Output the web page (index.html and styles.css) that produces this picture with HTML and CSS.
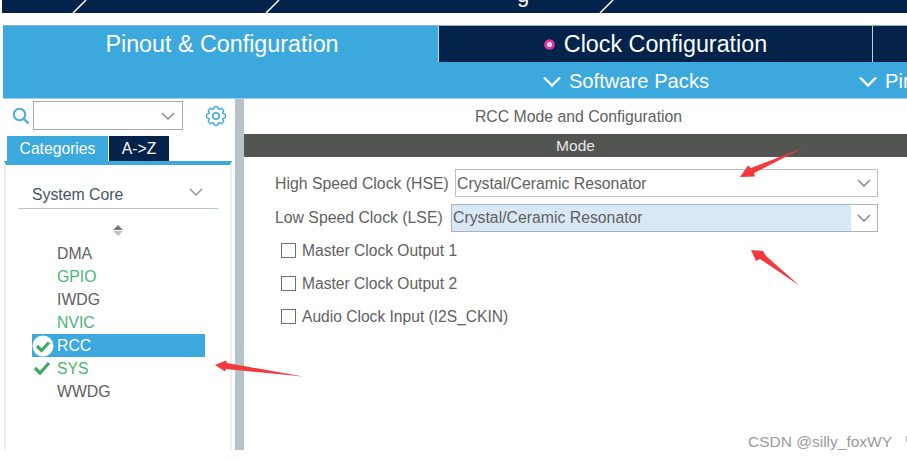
FILE: index.html
```html
<!DOCTYPE html>
<html lang="en">
<head>
    <meta charset="UTF-8">
    <title>RCC Mode and Configuration</title>
    <link rel="stylesheet" href="styles.css">
</head>
<body>
    <div class="page">
        <!-- Breadcrumb strip, cut off by the crop -->
        <div class="top-bar">
            <span class="crumb-cut">g</span>
            <svg class="crumb-lines" width="905" height="13" viewBox="0 0 905 13">
                <path d="M71 13 L84 0 M264 13 L277 0 M598 13 L611 0" stroke="#fff" stroke-width="1.5" fill="none"/>
            </svg>
        </div>

        <div class="tabs">
            <div class="tab-col tab-col-active">
                <div class="tab-main tab-main-pinout">Pinout &amp; Configuration</div>
                <div class="tab-sub"></div>
            </div>
            <div class="tab-col tab-col-clock">
                <div class="tab-main tab-dark">
                    <svg class="clock-dot" width="11" height="11" viewBox="0 0 12 12">
                        <circle cx="6" cy="6" r="5.8" fill="#e0369b"/>
                        <circle cx="6" cy="6" r="2.8" fill="#f6d5e8"/>
                    </svg>
                    Clock Configuration
                </div>
                <div class="tab-sub tab-sub-packs">
                    <svg class="sub-chevron" width="18" height="11" viewBox="0 0 18 11"><path d="M1 1.5 L9 9.5 L17 1.5" stroke="#fff" stroke-width="2.4" fill="none"/></svg>
                    Software Packs
                </div>
            </div>
            <div class="tab-col tab-col-rest">
                <div class="tab-main tab-dark"></div>
                <div class="tab-sub tab-sub-left">
                    <svg class="sub-chevron" width="18" height="11" viewBox="0 0 18 11"><path d="M1 1.5 L9 9.5 L17 1.5" stroke="#fff" stroke-width="2.4" fill="none"/></svg>
                    Pinout
                </div>
            </div>
        </div>

        <div class="workspace">
            <div class="sidebar">
                <div class="search-row">
                    <svg class="search-icon" width="18" height="18" viewBox="0 0 18 18">
                        <circle cx="7.5" cy="7.5" r="5.7" stroke="#4aaee0" stroke-width="2" fill="none"/>
                        <path d="M11.7 11.7 L16.5 16.5" stroke="#4aaee0" stroke-width="2.4"/>
                    </svg>
                    <div class="search-box">
                        <svg width="14" height="8" viewBox="0 0 14 8"><path d="M1 1 L7 7 L13 1" stroke="#8a8a8a" stroke-width="1.5" fill="none"/></svg>
                    </div>
                    <svg class="gear-icon" width="20" height="20" viewBox="0 0 20 20">
                        <path d="M16.86 7.5 L19.36 8.35 L19.36 11.65 L16.86 12.5 L16.62 13.09 L17.78 15.45 L15.45 17.78 L13.09 16.62 L12.5 16.86 L11.65 19.36 L8.35 19.36 L7.5 16.86 L6.91 16.62 L4.55 17.78 L2.22 15.45 L3.38 13.09 L3.14 12.5 L0.64 11.65 L0.64 8.35 L3.14 7.5 L3.38 6.91 L2.22 4.55 L4.55 2.22 L6.91 3.38 L7.5 3.14 L8.35 0.64 L11.65 0.64 L12.5 3.14 L13.09 3.38 L15.45 2.22 L17.78 4.55 L16.62 6.91 Z" stroke="#4aaee0" stroke-width="1.5" fill="none" stroke-linejoin="round"/>
                        <circle cx="10" cy="10" r="3.2" stroke="#4aaee0" stroke-width="1.7" fill="none"/>
                    </svg>
                </div>
                <div class="side-tabs">
                    <div class="side-tab side-tab-active">Categories</div>
                    <div class="side-tab side-tab-dark">A-&gt;Z</div>
                </div>
                <div class="side-panel">
                    <div class="group-head">
                        <span>System Core</span>
                        <svg class="group-chevron" width="14" height="8" viewBox="0 0 14 8"><path d="M1 1 L7 7 L13 1" stroke="#8a9299" stroke-width="1.4" fill="none"/></svg>
                    </div>
                    <div class="scroll-mark">
                        <span class="scroll-up"></span>
                        <span class="scroll-down"></span>
                    </div>
                    <ul class="ip-list">
                        <li class="ip-item">DMA</li>
                        <li class="ip-item ip-green">GPIO</li>
                        <li class="ip-item">IWDG</li>
                        <li class="ip-item ip-green">NVIC</li>
                        <li class="ip-item ip-selected">
                            <svg class="ip-icon" width="22" height="22" viewBox="0 0 22 22">
                                <circle cx="11" cy="11" r="10.5" fill="#fff"/>
                                <path d="M5 11 L9.5 15.5 L17 7.5" stroke="#3fa96a" stroke-width="3.2" fill="none"/>
                            </svg>
                            RCC
                        </li>
                        <li class="ip-item ip-green">
                            <svg class="ip-icon" width="18" height="14" viewBox="0 0 18 14">
                                <path d="M2 7 L7 12 L16 2" stroke="#3fa96a" stroke-width="3.2" fill="none"/>
                            </svg>
                            SYS
                        </li>
                        <li class="ip-item">WWDG</li>
                    </ul>
                </div>
            </div>
            <div class="splitter"></div>
            <div class="main">
                <div class="main-title">RCC Mode and Configuration</div>
                <div class="mode-bar">Mode</div>
                <div class="form">
                    <div class="form-row form-row-hse">
                        <label class="form-label">High Speed Clock (HSE)</label>
                        <div class="select">
                            <span class="select-text">Crystal/Ceramic Resonator</span>
                            <span class="select-btn"><svg width="14" height="8" viewBox="0 0 14 8"><path d="M1 1 L7 7 L13 1" stroke="#808080" stroke-width="1.4" fill="none"/></svg></span>
                        </div>
                    </div>
                    <div class="form-row form-row-lse">
                        <label class="form-label">Low Speed Clock (LSE)</label>
                        <div class="select select-picked">
                            <span class="select-text">Crystal/Ceramic Resonator</span>
                            <span class="select-btn"><svg width="14" height="8" viewBox="0 0 14 8"><path d="M1 1 L7 7 L13 1" stroke="#808080" stroke-width="1.4" fill="none"/></svg></span>
                        </div>
                    </div>
                    <div class="check-row"><span class="check"></span>Master Clock Output 1</div>
                    <div class="check-row"><span class="check"></span>Master Clock Output 2</div>
                    <div class="check-row"><span class="check"></span>Audio Clock Input (I2S_CKIN)</div>
                </div>
            </div>
        </div>

        <div class="watermark">CSDN @silly_foxWY</div>
        <div class="watermark-cut"></div>

        <!-- Red arrows drawn over the screenshot -->
        <svg class="arrows" width="907" height="461" viewBox="0 0 907 461">
            <path d="M803 148 L754 173 L755 176.5 L740 177 L748 165.5 L751 168 Z" fill="#f4393c"/>
            <path d="M800 286 L766 256 L763 251 L751 250 L756 261 L760 259 Z" fill="#f4393c"/>
            <path d="M303 376.5 L227 363 L226 360.5 L215 365 L225 371.5 L226 369 Z" fill="#f4393c"/>
        </svg>
    </div>
</body>
</html>
```

FILE: styles.css
```css
/* General styles */
html, body {
    margin: 0;
    padding: 0;
    background-color: white;
}
.page {
    position: relative;
    width: 907px;
    height: 461px;
    overflow: hidden;
    font-family: "Liberation Sans", Arial, sans-serif;
    color: #616161;
}
/* Top strip */
.top-bar {
    position: relative;
    height: 13px;
    margin-left: 2px;
    background-color: #03234b;
    overflow: hidden;
}
.crumb-cut {
    position: absolute;
    left: 515px;
    top: -18px;
    font-size: 22px;
    line-height: 26px;
    color: white;
}
.crumb-lines {
    position: absolute;
    left: 0;
    top: 0;
}
/* Main tabs */
.tabs {
    display: flex;
    margin: 12px 0 0 3px;
    border-top: 1px solid #8fb0c8;
}
.tab-col {
    display: flex;
    flex-direction: column;
    flex-shrink: 0;
}
.tab-col-active {
    width: 435px;
    background-color: #3ba9dd;
}
.tab-col-clock {
    width: 434px;
}
.tab-col-rest {
    width: 35px;
}
.tab-main {
    height: 36px;
    display: flex;
    align-items: center;
    justify-content: center;
    gap: 9px;
    box-sizing: border-box;
    font-size: 23.3px;
    color: white;
}
.tab-main-pinout {
    padding-left: 3px;
}
.tab-dark {
    background-color: #03234b;
    border-left: 1px solid #c8d0d8;
}
.tab-sub {
    height: 36px;
    display: flex;
    align-items: center;
    justify-content: center;
    gap: 8px;
    box-sizing: border-box;
    padding-top: 2px;
    background-color: #3ba9dd;
    font-size: 20.2px;
    color: white;
}
.sub-chevron {
    flex-shrink: 0;
}
.tab-sub-packs {
    padding-right: 58px;
}
.tab-sub-left {
    justify-content: flex-start;
    white-space: nowrap;
    margin-left: -13px;
}
/* Workspace */
.workspace {
    display: flex;
    height: 351px;
    margin-left: 3px;
    border-top: 1px solid #9fd0ea;
}
.sidebar {
    width: 232px;
    flex-shrink: 0;
}
.splitter {
    width: 9px;
    flex-shrink: 0;
    background-color: #b7c3cb;
}
.main {
    flex: 1;
    min-width: 0;
}
/* Search row */
.search-row {
    display: flex;
    align-items: center;
    height: 33px;
    margin-bottom: 4px;
    padding-left: 9px;
    box-sizing: border-box;
}
.search-box {
    width: 150px;
    height: 29px;
    margin-left: 3px;
    box-sizing: border-box;
    border: 1px solid #a8a8a8;
    display: flex;
    align-items: center;
    justify-content: flex-end;
    padding-right: 7px;
}
.gear-icon {
    margin-left: 23px;
}
/* Categories tabs */
.side-tabs {
    display: flex;
    margin-left: 4px;
    gap: 1px;
}
.side-tab {
    height: 25px;
    line-height: 26px;
    text-align: center;
    font-size: 15.7px;
    color: white;
}
.side-tab-active {
    width: 101px;
    background-color: #3ba9dd;
}
.side-tab-dark {
    width: 60px;
    background-color: #03234b;
}
.side-panel {
    border-top: 4px solid #3ba9dd;
    border-left: 2px solid #eeeeee;
    border-right: 2px solid #eeeeee;
    margin: 0 3px 0 1px;
    height: 289px;
    box-sizing: border-box;
}
.group-head {
    display: flex;
    justify-content: space-between;
    align-items: center;
    margin: 0 12px;
    height: 44px;
    padding: 17px 15px 0 14px;
    box-sizing: border-box;
    border-bottom: 1px solid #b3c3d6;
    font-size: 15.8px;
    color: #44546a;
}
.group-chevron {
    margin-top: -6px;
}
.scroll-mark {
    display: flex;
    flex-direction: column;
    align-items: center;
    gap: 1px;
    margin: 16px 0 0 3px;
    width: 218px;
}
.scroll-up {
    border-left: 5px solid transparent;
    border-right: 5px solid transparent;
    border-bottom: 5px solid #777777;
}
.scroll-down {
    border-left: 5px solid transparent;
    border-right: 5px solid transparent;
    border-top: 5px solid #c4c4c4;
}
.ip-list {
    list-style: none;
    margin: 6px 0 0 26px;
    padding: 0;
    width: 173px;
}
.ip-item {
    position: relative;
    height: 23px;
    line-height: 23px;
    padding-left: 25px;
    font-size: 15.8px;
}
.ip-green {
    color: #4db573;
}
.ip-selected {
    background-color: #3ba9dd;
    color: white;
}
.ip-icon {
    position: absolute;
    left: 0;
    top: 1px;
}
.ip-green .ip-icon {
    left: 1px;
    top: 4px;
}
/* Main panel */
.main-title {
    height: 35px;
    line-height: 35px;
    padding-left: 6px;
    text-align: center;
    font-size: 15.8px;
}
.mode-bar {
    height: 23px;
    line-height: 23px;
    text-align: center;
    background-color: #535553;
    color: #e8e8e8;
    font-size: 15.5px;
}
.form {
    padding: 12px 29px 0 31px;
}
.form-row {
    display: flex;
    align-items: center;
    justify-content: space-between;
    height: 28px;
}
.form-row-hse .form-label {
    padding-top: 2px;
}
.form-row-hse .select-text {
    line-height: 27px;
}
.form-row-lse {
    margin-top: 7px;
}
.form-label {
    font-size: 15.8px;
    white-space: nowrap;
}
.select {
    display: flex;
    width: 423px;
    height: 28px;
    box-sizing: border-box;
    border: 1.5px solid #b9c0c6;
    font-size: 15.8px;
}
.select-picked {
    width: 427px;
    border-color: #aab3ba;
}
.select-text {
    flex: 1;
    line-height: 25px;
    padding-left: 1px;
}
.select-picked .select-text {
    background-color: #d9e8f5;
}
.select-btn {
    width: 26px;
    display: flex;
    align-items: center;
    justify-content: center;
}
.check-row {
    display: flex;
    align-items: center;
    height: 33px;
    margin-left: 6px;
    font-size: 15.6px;
}
.form-row-lse + .check-row {
    margin-top: 2px;
}
.check {
    width: 15px;
    height: 15px;
    box-sizing: border-box;
    border: 1.5px solid #707070;
    margin-right: 6px;
}
.watermark {
    position: absolute;
    left: 748px;
    top: 433px;
    font-size: 15.5px;
    color: #9a9a9a;
}
.watermark-cut {
    position: absolute;
    left: 906px;
    top: 436px;
    width: 1px;
    height: 6px;
    background-color: #bdbdbd;
}
.arrows {
    position: absolute;
    left: 0;
    top: 0;
}
```
